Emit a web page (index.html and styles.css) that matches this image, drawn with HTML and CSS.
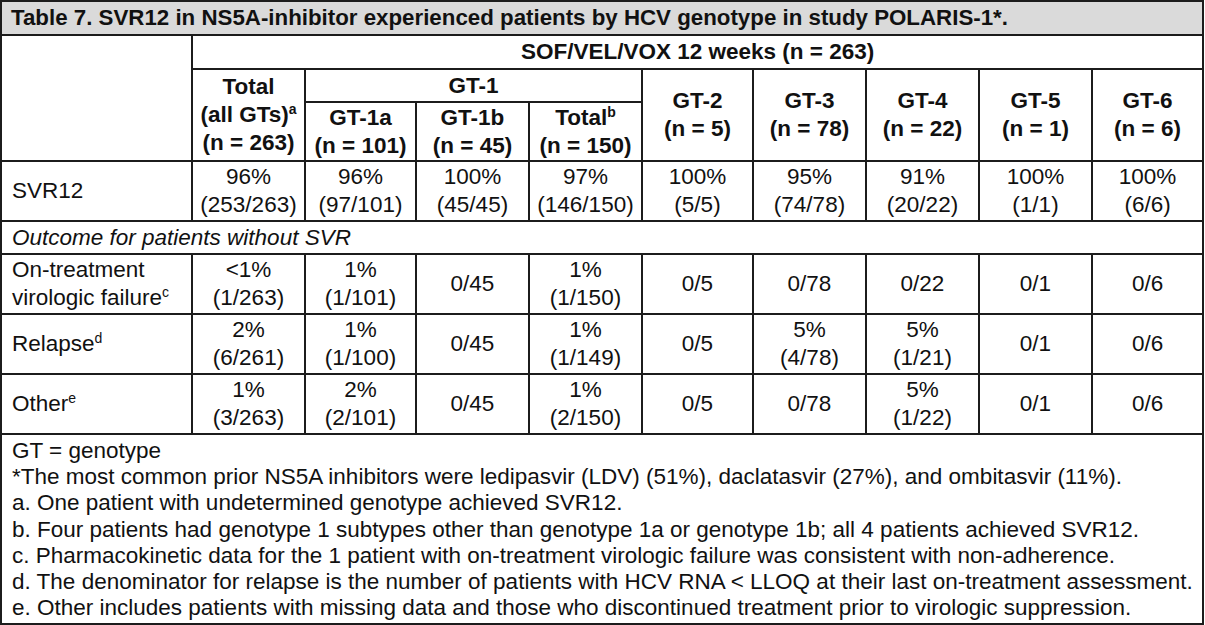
FILE: index.html
```html
<!DOCTYPE html>
<html lang="en">
<head>
<meta charset="utf-8">
<title>Table 7</title>
<link rel="stylesheet" href="styles.css">
</head>
<body>
<table class="svr">
  <colgroup>
    <col class="c-label">
    <col class="c-a"><col class="c-b"><col class="c-a"><col class="c-a">
    <col class="c-b"><col class="c-a"><col class="c-a"><col class="c-a"><col class="c-b">
  </colgroup>
  <tr class="r-title">
    <th class="title" colspan="10">Table 7. SVR12 in NS5A-inhibitor experienced patients by HCV genotype in study POLARIS-1*.</th>
  </tr>
  <tr class="r-sof">
    <th class="blank" rowspan="3"></th>
    <th colspan="9">SOF/VEL/VOX 12 weeks (n = 263)</th>
  </tr>
  <tr class="r-gt1">
    <th rowspan="2">Total<br>(all GTs)<sup>a</sup><br>(n = 263)</th>
    <th colspan="3">GT-1</th>
    <th rowspan="2">GT-2<br>(n = 5)</th>
    <th rowspan="2">GT-3<br>(n = 78)</th>
    <th rowspan="2">GT-4<br>(n = 22)</th>
    <th rowspan="2">GT-5<br>(n = 1)</th>
    <th rowspan="2">GT-6<br>(n = 6)</th>
  </tr>
  <tr class="r-sub">
    <th>GT-1a<br>(n = 101)</th>
    <th>GT-1b<br>(n = 45)</th>
    <th>Total<sup>b</sup><br>(n = 150)</th>
  </tr>
  <tr class="r-data">
    <td class="label">SVR12</td>
    <td>96%<br>(253/263)</td>
    <td>96%<br>(97/101)</td>
    <td>100%<br>(45/45)</td>
    <td>97%<br>(146/150)</td>
    <td>100%<br>(5/5)</td>
    <td>95%<br>(74/78)</td>
    <td>91%<br>(20/22)</td>
    <td>100%<br>(1/1)</td>
    <td>100%<br>(6/6)</td>
  </tr>
  <tr class="r-outcome">
    <td class="outcome" colspan="10">Outcome for patients without SVR</td>
  </tr>
  <tr class="r-data">
    <td class="label">On-treatment<br>virologic failure<sup>c</sup></td>
    <td>&lt;1%<br>(1/263)</td>
    <td>1%<br>(1/101)</td>
    <td>0/45</td>
    <td>1%<br>(1/150)</td>
    <td>0/5</td>
    <td>0/78</td>
    <td>0/22</td>
    <td>0/1</td>
    <td>0/6</td>
  </tr>
  <tr class="r-data">
    <td class="label">Relapse<sup>d</sup></td>
    <td>2%<br>(6/261)</td>
    <td>1%<br>(1/100)</td>
    <td>0/45</td>
    <td>1%<br>(1/149)</td>
    <td>0/5</td>
    <td>5%<br>(4/78)</td>
    <td>5%<br>(1/21)</td>
    <td>0/1</td>
    <td>0/6</td>
  </tr>
  <tr class="r-data r-last">
    <td class="label">Other<sup>e</sup></td>
    <td>1%<br>(3/263)</td>
    <td>2%<br>(2/101)</td>
    <td>0/45</td>
    <td>1%<br>(2/150)</td>
    <td>0/5</td>
    <td>0/78</td>
    <td>5%<br>(1/22)</td>
    <td>0/1</td>
    <td>0/6</td>
  </tr>
  <tr class="r-notes">
    <td class="notes" colspan="10">
      <p>GT = genotype</p>
      <p>*The most common prior NS5A inhibitors were ledipasvir (LDV) (51%), daclatasvir (27%), and ombitasvir (11%).</p>
      <p>a. One patient with undetermined genotype achieved SVR12.</p>
      <p>b. Four patients had genotype 1 subtypes other than genotype 1a or genotype 1b; all 4 patients achieved SVR12.</p>
      <p>c. Pharmacokinetic data for the 1 patient with on-treatment virologic failure was consistent with non-adherence.</p>
      <p>d. The denominator for relapse is the number of patients with HCV RNA &lt; LLOQ at their last on-treatment assessment.</p>
      <p>e. Other includes patients with missing data and those who discontinued treatment prior to virologic suppression.</p>
    </td>
  </tr>
</table>
</body>
</html>
```
FILE: styles.css
```css
html, body {
  margin: 0;
  padding: 0;
  background: #ffffff;
}

body {
  font-family: "Liberation Sans", Arial, Helvetica, sans-serif;
  font-size: 22.5px;
  color: #111111;
}

.svr {
  border-collapse: collapse;
  table-layout: fixed;
  width: 1204px;
  border: 2px solid #1c1c1c;
}

.c-label { width: 191px; }
.c-a { width: 113px; }
.c-b { width: 111px; }

.svr th,
.svr td {
  border: 2px solid #1c1c1c;
  padding: 0 2px;
  text-align: center;
  vertical-align: middle;
  line-height: 28px;
  white-space: nowrap;
}

.svr th {
  font-weight: bold;
}

.svr sup {
  font-size: 14px;
  line-height: 0;
  vertical-align: 8px;
}

.r-title { height: 34px; }
.r-sof { height: 34px; }
.r-gt1 { height: 33px; }
.r-sub { height: 59px; }
.r-data { height: 60px; }
.r-outcome { height: 33px; }

.svr th.title {
  background: #dadada;
  text-align: left;
  padding-left: 9px;
  font-size: 22.3px;
  line-height: 26px;
}

.svr td.label {
  text-align: left;
  padding-left: 10px;
}

.svr td.outcome {
  text-align: left;
  padding-left: 10px;
  font-style: italic;
  line-height: 26px;
}

.svr td.notes {
  text-align: left;
  padding: 3px 8px 2px 10px;
  line-height: 26.2px;
}

.notes p {
  margin: 0;
}
```
